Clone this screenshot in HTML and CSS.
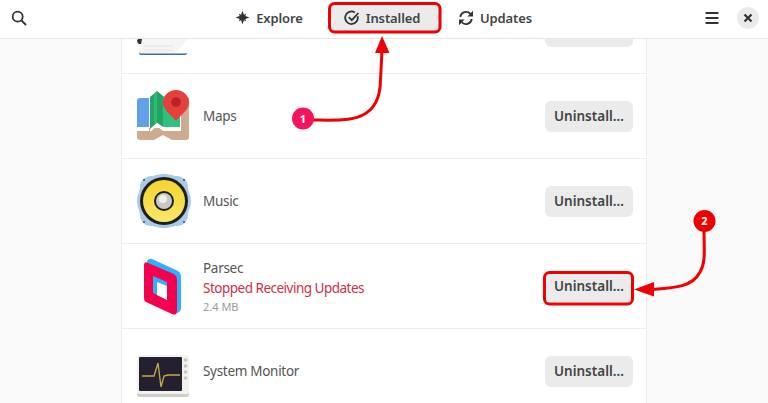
FILE: index.html
```html
<!DOCTYPE html>
<html lang="en">
<head>
<meta charset="utf-8">
<title>Software</title>
<link rel="stylesheet" href="styles.css">
</head>
<body>
<div class="app">
  <header class="header">
    <div class="header-left">
      <button class="icon-btn search-btn" aria-label="Search">
        <svg width="16" height="16" viewBox="0 0 16 16"><circle cx="6.700" cy="6.700" r="5" class="line"/><path d="M10.500 10.500 15 15" class="line"/></svg>
      </button>
    </div>
    <nav class="tabs">
      <div class="tab">
        <svg width="15" height="15" viewBox="0 0 16 16"><path class="fill" d="M8 0.500 9.500 5 12 3.900 11 6.500 15.500 8 11 9.500 12 12.100 9.500 11 8 15.500 6.500 11 4 12.100 5 9.500 0.500 8 5 6.500 4 3.900 6.500 5Z"/></svg>
        <span>Explore</span>
      </div>
      <div class="tab tab-active">
        <svg width="16" height="16" viewBox="0 0 16 16"><path class="line" d="M13.600 6.200A6.300 6.300 0 1 1 10.800 2.400"/><path class="line" d="M4.800 7.200 7.800 10.200 14.400 3"/></svg>
        <span>Installed</span>
      </div>
      <div class="tab">
        <svg width="16" height="16" viewBox="0 0 16 16"><path class="line" d="M2.200 7A6 6 0 0 1 12.600 4"/><path class="fill" d="M15 0.800V6.400H9.400Z"/><path class="line" d="M13.800 9A6 6 0 0 1 3.400 12"/><path class="fill" d="M1 15.200V9.600H6.600Z"/></svg>
        <span>Updates</span>
      </div>
    </nav>
    <div class="header-right">
      <button class="icon-btn menu-btn" aria-label="Menu">
        <svg width="14" height="12" viewBox="0 0 14 12"><path class="line" d="M0.500 1H13.500M0.500 6H13.500M0.500 11H13.500"/></svg>
      </button>
      <button class="icon-btn close-btn" aria-label="Close">
        <svg width="10" height="10" viewBox="0 0 10 10"><path class="line thick" d="M1.500 1.500 8.500 8.500M8.500 1.500 1.500 8.500"/></svg>
      </button>
    </div>
  </header>

  <main class="content">
    <section class="list">
      <article class="row">
        <svg class="app-icon" width="54" height="52" viewBox="0 0 54 52">
          <rect x="2" y="4" width="48" height="46" rx="3" fill="#f6f5f4"/>
          <path d="M2 47V48Q2 50 4 50H48Q50 50 50 48V47Q50 48.500 48 48.500H4Q2 48.500 2 47Z" fill="#3a6fb8"/>
          <path d="M7 41H36M7 45H36" stroke="#e4e3e0"/>
          <path d="M38 48 50 35V48Z" fill="#fff"/>
          <path d="M38 48 50 35 38 35Z" fill="#f6f5f4"/>
          <path d="M0 35Q2 33 5 34L4 39H2Q0 38 0 35Z" fill="#333"/>
        </svg>
        <div class="app-info"></div>
        <button class="uninstall" aria-label="Uninstall"></button>
      </article>

      <article class="row">
        <svg class="app-icon" width="54" height="52" viewBox="0 0 54 52">
          <path d="M0 38H52V47Q52 50 49 50H35L26 45 17 50H3Q0 50 0 47Z" fill="#cdab8f"/>
          <path d="M44 8H52V46H44Z" fill="#cdab8f"/>
          <path d="M0 11Q0 8 3 8H12V37H0Z" fill="#62a0ea"/>
          <path d="M0 37H12V41H0Z" fill="#fff"/>
          <path d="M13 7 20 1 26 6V37L20 33 13 39Z" fill="#26a269"/>
          <path d="M17 3.500 20 1V33L17 35Z" fill="#33d17a" opacity=".55"/>
          <path d="M26 6 43 12V37H26Z" fill="#2ec27e"/>
          <path d="M26 37H44V41H26L20 36 13 42V39L20 33Z" fill="#fff"/>
          <path d="M39 0C31.500 0 26 5.700 26 12.500 26 20 34 24.500 39 31 44 24.500 52 20 52 12.500 52 5.700 46.500 0 39 0Z" fill="#e5403a"/>
          <circle cx="39" cy="12" r="4.800" fill="#b5212f"/>
        </svg>
        <div class="app-info"><span class="app-name">Maps</span></div>
        <button class="uninstall">Uninstall…</button>
      </article>

      <article class="row">
        <svg class="app-icon" width="54" height="56" viewBox="0 0 54 56">
          <defs>
            <linearGradient id="cone" x1="0" y1="0" x2="0" y2="1">
              <stop offset="0" stop-color="#f6d32d"/>
              <stop offset="1" stop-color="#f9e76a"/>
            </linearGradient>
          </defs>
          <path d="M27 1C33 1 36 3 40 3 46 3 51 8 51 14 51 18 54 22 54 28 54 34 51 38 51 42 51 48 46 53 40 53 36 53 33 55 27 55 21 55 18 53 14 53 8 53 3 48 3 42 3 38 0 34 0 28 0 22 3 18 3 14 3 8 8 3 14 3 18 3 21 1 27 1Z" fill="#a9cbe6"/>
          <circle cx="27" cy="28" r="24" fill="#1e1e1e"/>
          <circle cx="27" cy="28" r="21" fill="url(#cone)"/>
          <circle cx="27" cy="28" r="10" fill="#1e1e1e"/>
          <circle cx="27" cy="28" r="8" fill="#c8c8c4"/>
          <circle cx="26" cy="26" r="4" fill="#f0f0ee"/>
          <g fill="#33506a"><circle cx="7" cy="7" r="1"/><circle cx="47" cy="7" r="1"/><circle cx="7" cy="49" r="1"/><circle cx="47" cy="49" r="1"/></g>
        </svg>
        <div class="app-info"><span class="app-name">Music</span></div>
        <button class="uninstall">Uninstall…</button>
      </article>

      <article class="row">
        <svg class="app-icon" width="54" height="60" viewBox="0 0 54 60">
          <path d="M10 5Q12 2 15 3L41 15Q44 17 44 20V52Q44 56 40 57L10 44Z" fill="#2eb0ff"/>
          <path d="M7 9Q7 5 11 7L37 18Q40 20 40 23V55Q40 60 35 58L9 46Q7 45 7 42Z" fill="#f5004f"/>
          <path d="M16 20 30 26V44L16 37Z" fill="#2eb0ff"/>
          <path d="M20 26 30 30V44L20 39Z" fill="#fff"/>
        </svg>
        <div class="app-info app-info-multi">
          <span class="app-name">Parsec</span>
          <span class="app-warning">Stopped Receiving Updates</span>
          <span class="app-size">2.4 MB</span>
        </div>
        <button class="uninstall">Uninstall…</button>
      </article>

      <article class="row">
        <svg class="app-icon" width="54" height="52" viewBox="0 0 54 52">
          <rect x="0" y="10" width="52" height="42" rx="3" fill="#f3f2ef"/>
          <path d="M0 47V49Q0 52 3 52H49Q52 52 52 49V47Q52 49 49 49H3Q0 49 0 47Z" fill="#cfcdc8"/>
          <rect x="2" y="12" width="43" height="34" rx="1" fill="#241f31"/>
          <path d="M5 31H17L21 18 24 42 27 31 31 30H43" fill="none" stroke="#c4ad44" stroke-width="1.300"/>
          <g fill="#c8c6c1"><circle cx="48.500" cy="15" r="1.800"/><circle cx="48.500" cy="21" r="1.800"/><circle cx="48.500" cy="27" r="1.800"/><circle cx="48.500" cy="33" r="1.800"/></g>
        </svg>
        <div class="app-info"><span class="app-name">System Monitor</span></div>
        <button class="uninstall">Uninstall…</button>
      </article>
    </section>
  </main>

  <svg class="annotations" width="768" height="403" viewBox="0 0 768 403">
    <rect x="329.500" y="3.500" width="110.500" height="28.500" rx="5" class="mark"/>
    <rect x="544.500" y="272.500" width="88" height="31.500" rx="5" class="mark"/>
    <path d="M310 120C345 120 380 125 380.500 80L382 50" class="mark"/>
    <path d="M382 36 389.500 53H375Z" class="arrowhead"/>
    <path d="M704 228C704 250 706 262 700 272 692 288 672 288 650 289.500" class="mark"/>
    <path d="M634 289.500 654 282V296.500Z" class="arrowhead"/>
    <circle cx="303" cy="118.500" r="11" fill="#f5155f"/>
    <circle cx="704.500" cy="221" r="11" fill="#f00000"/>
    <text x="303" y="122.500" class="badge">1</text>
    <text x="704.500" y="225" class="badge">2</text>
  </svg>
</div>
</body>
</html>
```
FILE: styles.css
```css
* { box-sizing: border-box; }
html, body { margin: 0; height: 100%; overflow: hidden; }
body { font-family: "Noto Sans", sans-serif; color: #3d3d3d; background: #fafafa; }

.app { position: relative; width: 768px; height: 403px; display: flex; flex-direction: column; overflow: hidden; }

.header {
  flex: 0 0 39px;
  display: grid;
  grid-template-columns: 1fr auto 1fr;
  align-items: center;
  padding-bottom: 3px;
  background: #fff;
  border-bottom: 1px solid #e6e6e6;
  position: relative;
  z-index: 1;
}
.header-left { display: flex; padding-left: 11px; }
.header-right { display: flex; justify-content: flex-end; align-items: center; padding-right: 9px; gap: 18px; }

.icon-btn { border: 0; padding: 0; background: none; display: flex; align-items: center; justify-content: center; }
.search-btn { width: 16px; height: 16px; }
.menu-btn { width: 14px; height: 12px; }
.close-btn { width: 22px; height: 22px; border-radius: 50%; background: #ebebeb; }

.line { fill: none; stroke: #333; stroke-width: 1.800; }
.thick { stroke-width: 2.200; }
.fill { fill: #333; }

.tabs { display: flex; gap: 2px; height: 29px; }
.tab {
  width: 111px;
  display: flex;
  align-items: center;
  justify-content: center;
  gap: 6px;
  padding-right: 4px;
  border-radius: 6px;
  font-size: 13px;
  font-weight: 600;
  letter-spacing: -0.1px;
  color: #444;
}
.tab-active { background: #ebebeb; }

.content { flex: 1; min-height: 0; overflow: hidden; }
.list {
  width: 526px;
  margin: -50px auto 0;
  background: #fff;
  border-left: 1px solid #ececec;
  border-right: 1px solid #ececec;
}
.row {
  height: 85px;
  display: flex;
  align-items: center;
  padding: 0 13px 0 15px;
  border-bottom: 1px solid #ececec;
}
.app-icon { flex: 0 0 54px; margin-right: 12px; overflow: visible; }
.app-info { flex: 1; display: flex; flex-direction: column; }
.app-info-multi { padding-top: 2px; }
.app-name { font-size: 13.500px; line-height: 20px; letter-spacing: -0.3px; color: #555; }
.app-warning { font-size: 13.500px; line-height: 20px; letter-spacing: -0.5px; color: #c9304a; }
.app-size { font-size: 11px; line-height: 18px; color: #9a9a9a; }

.uninstall {
  width: 88px;
  height: 31px;
  padding: 0;
  border: 0;
  border-radius: 6px;
  background: #ebebeb;
  font-family: inherit;
  font-size: 13.500px;
  font-weight: 600;
  color: #444;
}

.annotations { position: absolute; left: 0; top: 0; z-index: 2; pointer-events: none; }
.mark { fill: none; stroke: #f00000; stroke-width: 3; }
.arrowhead { fill: #f00000; }
.badge { fill: #fff; font-size: 11px; font-weight: 700; text-anchor: middle; font-family: "Noto Sans", sans-serif; }
```
